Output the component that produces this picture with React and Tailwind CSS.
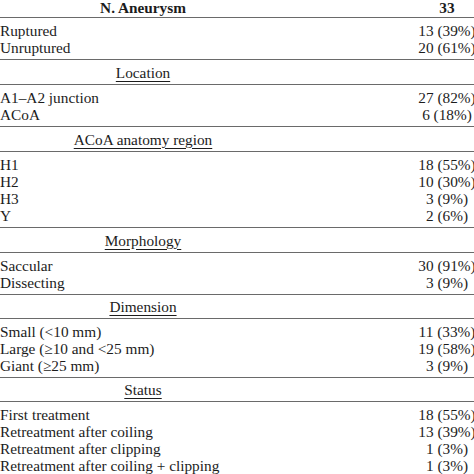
import React from "react";

const groups = [
  {
    title: null,
    rows: [
      ["Ruptured", "13 (39%)"],
      ["Unruptured", "20 (61%)"],
    ],
  },
  {
    title: "Location",
    h: "h-[25px]",
    rows: [
      ["A1–A2 junction", "27 (82%)"],
      ["ACoA", "6 (18%)"],
    ],
  },
  {
    title: "ACoA anatomy region",
    h: "h-[25px]",
    rows: [
      ["H1", "18 (55%)"],
      ["H2", "10 (30%)"],
      ["H3", "3 (9%)"],
      ["Y", "2 (6%)"],
    ],
  },
  {
    title: "Morphology",
    h: "h-[25px]",
    rows: [
      ["Saccular", "30 (91%)"],
      ["Dissecting", "3 (9%)"],
    ],
  },
  {
    title: "Dimension",
    h: "h-[24px]",
    rows: [
      ["Small (<10 mm)", "11 (33%)"],
      ["Large (≥10 and <25 mm)", "19 (58%)"],
      ["Giant (≥25 mm)", "3 (9%)"],
    ],
  },
  {
    title: "Status",
    h: "h-[24px]",
    rows: [
      ["First treatment", "18 (55%)"],
      ["Retreatment after coiling", "13 (39%)"],
      ["Retreatment after clipping", "1 (3%)"],
      ["Retreatment after coiling + clipping", "1 (3%)"],
    ],
  },
];

function Group({ g }) {
  return (
    <>
      {g.title && (
        <div className={"flex items-center border-b border-[#6a6a6a] " + g.h}>
          <div className="w-[286px] shrink-0 text-center">
            <span className="underline decoration-1 underline-offset-[3px]">{g.title}</span>
          </div>
          <div className="w-[322px] shrink-0" />
        </div>
      )}
      <div className="flex flex-col border-b border-[#6a6a6a] pt-[4px] pb-[3px]">
        {g.rows.map(([a, b], i) => (
          <div key={i} className="flex h-[17px] items-center">
            <div className="w-[286px] shrink-0 whitespace-nowrap">{a}</div>
            <div className="w-[322px] shrink-0 whitespace-nowrap text-center">{b}</div>
          </div>
        ))}
      </div>
    </>
  );
}

export default function App() {
  return (
    <div
      className="h-[474px] w-[474px] overflow-hidden bg-white text-[15.3px] leading-[17px] text-[#1c1c1c]"
      style={{ fontFamily: '"Liberation Serif", "Times New Roman", serif' }}
    >
      <div className="w-[608px]">
        <div className="flex h-[18px] items-start border-b border-[#6a6a6a] font-bold">
          <div className="w-[286px] shrink-0 text-center leading-[15px]">N. Aneurysm</div>
          <div className="w-[322px] shrink-0 text-center leading-[15px]">33</div>
        </div>
        {groups.map((g, i) => (
          <Group key={i} g={g} />
        ))}
      </div>
    </div>
  );
}
